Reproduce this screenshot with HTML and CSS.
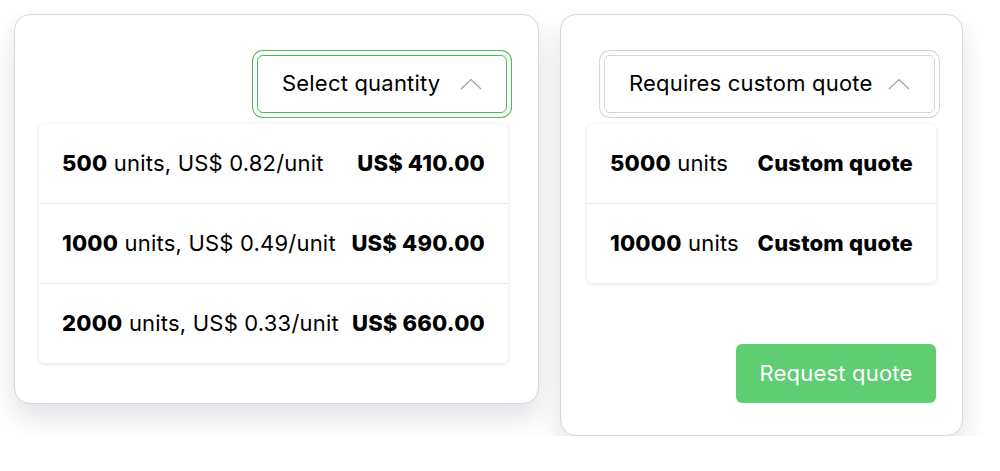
FILE: index.html
```html
<!DOCTYPE html>
<html>
<head>
<meta charset="utf-8">
<link rel="stylesheet" href="styles.css">
</head>
<body>
<div class="page">
  <section class="card card-a">
    <div class="select-row">
      <button class="select active">
        <span>Select quantity</span>
        <svg class="chev" width="22" height="12" viewBox="0 0 22 12"><path d="M1 11 L11 1.5 L21 11" fill="none" stroke="#a0a0a0" stroke-width="1.2"/></svg>
      </button>
    </div>
    <ul class="list">
      <li><span><b>500</b> units, US$ 0.82/unit</span><b>US$ 410.00</b></li>
      <li><span><b>1000</b> units, US$ 0.49/unit</span><b>US$ 490.00</b></li>
      <li><span><b>2000</b> units, US$ 0.33/unit</span><b>US$ 660.00</b></li>
    </ul>
  </section>
  <section class="card card-b">
    <div class="select-row">
      <button class="select">
        <span>Requires custom quote</span>
        <svg class="chev" width="22" height="12" viewBox="0 0 22 12"><path d="M1 11 L11 1.5 L21 11" fill="none" stroke="#a0a0a0" stroke-width="1.2"/></svg>
      </button>
    </div>
    <ul class="list">
      <li><span><b>5000</b> units</span><b>Custom quote</b></li>
      <li><span><b>10000</b> units</span><b>Custom quote</b></li>
    </ul>
    <div class="actions">
      <button class="quote">Request quote</button>
    </div>
  </section>
</div>
</body>
</html>
```
FILE: styles.css
```css
* { box-sizing: border-box; }
html, body { margin: 0; background: #fff; }
body { font-family: "Inter", "Noto Sans", sans-serif; color: #000; }
.page {
  display: flex;
  align-items: flex-start;
  gap: 21px;
  padding: 14px 0 0 14px;
}
.card {
  background: #fff;
  border: 1px solid #d4d7dd;
  border-radius: 16px;
  box-shadow: 0 14px 26px rgba(30, 40, 60, 0.13);
}
.card-a { width: 525px; padding: 40px 30px 40px 24px; }
.card-b { width: 403px; padding: 40px 26px 32px 26px; }
.select-row { display: flex; justify-content: flex-end; padding-right: 1px; margin-bottom: 11px; }
.select {
  display: flex; align-items: center; justify-content: space-between;
  height: 58px;
  padding: 0 24px 0 24px;
  background: #fff;
  border: 1px solid #d3d6db;
  border-radius: 6px;
  box-shadow: 0 0 0 4px #fff, 0 0 0 5px #d3d6db;
  font: inherit; font-size: 22px; letter-spacing: 0.2px; color: #000;
  white-space: nowrap;
  gap: 8px;
}
.card-a .select { width: 250px; }
.card-b .select { width: 331px; }
.select.active { border-color: #4cbb55; box-shadow: 0 0 0 4px #fff, 0 0 0 5px #4cbb55; }
.select span { padding-bottom: 2px; }
.chev { display: block; margin-top: -1px; flex: none; }
.list {
  list-style: none; margin: 0; padding: 0;
  border-radius: 6px;
  background: #fff;
  box-shadow: 0 1px 4px rgba(0,0,0,0.12);
}
.list li {
  display: flex; justify-content: space-between; align-items: center;
  height: 80px;
  padding: 0 23px 2px;
  font-size: 22px;
  letter-spacing: 0.2px;
  border-top: 1px solid #e6e7ec;
  white-space: nowrap;
}
.list li:first-child { border-top: none; height: 79px; }
.list b { font-weight: 800; }
.actions { display: flex; justify-content: flex-end; margin-top: 61px; }
.quote {
  width: 200px; height: 59px;
  padding: 0 0 2px;
  background: #5fcd72; color: #fff;
  border: none; border-radius: 6px;
  font: inherit; font-size: 22px; letter-spacing: 0.2px;
}
```
